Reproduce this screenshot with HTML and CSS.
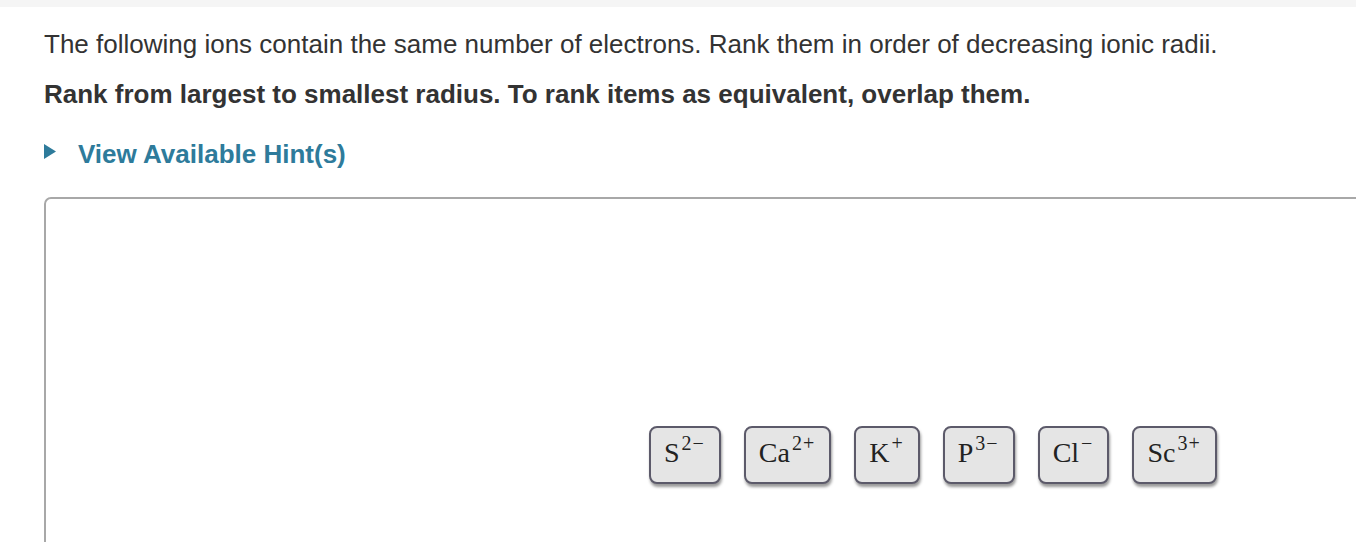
FILE: index.html
```html
<!DOCTYPE html>
<html lang="en">
<head>
    <meta charset="UTF-8">
    <title>Rank the ions</title>
    <link rel="stylesheet" href="styles.css">
</head>
<body>
    <div class="topbar"></div>
    <div class="problem">
        <p class="prompt">The following ions contain the same number of electrons. Rank them in order of decreasing ionic radii.</p>
        <p class="instructions">Rank from largest to smallest radius. To rank items as equivalent, overlap them.</p>
        <a class="hint" href="#">
            <svg width="12" height="15" viewBox="0 0 12 15"><polygon points="0,0 12,7.5 0,15" fill="#2e7b9b"></polygon></svg>
            <span>View Available Hint(s)</span>
        </a>
        <div class="rank-box">
            <div class="tiles">
                <div class="tile">S<sup>2&minus;</sup></div>
                <div class="tile">Ca<sup>2+</sup></div>
                <div class="tile">K<sup>+</sup></div>
                <div class="tile">P<sup>3&minus;</sup></div>
                <div class="tile">Cl<sup>&minus;</sup></div>
                <div class="tile">Sc<sup>3+</sup></div>
            </div>
        </div>
    </div>
</body>
</html>
```

FILE: styles.css
```css
body {
    margin: 0;
    overflow: hidden;
    background: #fff;
    font-family: "Liberation Sans", Arial, sans-serif;
    color: #333;
}
.topbar {
    height: 7px;
    background: #f5f5f5;
}
.problem {
    padding-left: 44px;
}
.prompt {
    margin: 22px 0 0;
    font-size: 26px;
    line-height: 30px;
}
.instructions {
    margin: 20px 0 0;
    font-size: 26px;
    line-height: 30px;
    font-weight: 700;
}
.hint {
    display: flex;
    align-items: center;
    gap: 22px;
    margin-top: 30px;
    color: #2e7b9b;
    font-size: 26px;
    font-weight: 700;
    text-decoration: none;
    line-height: 30px;
}
.hint svg {
    margin-bottom: 6px;
}
.rank-box {
    margin-top: 28px;
    margin-right: -40px;
    height: 400px;
    border: 2px solid #a8a8a8;
    border-radius: 7px 0 0 0;
}
.tiles {
    display: flex;
    gap: 23px;
    padding: 227px 0 0 603px;
}
.tile {
    box-sizing: border-box;
    height: 58px;
    padding: 0 14px 4px 13px;
    display: flex;
    align-items: center;
    border: 2px solid #5c5a6a;
    border-radius: 8px;
    background: #e5e5e5;
    box-shadow: 1px 3px 3px rgba(0,0,0,0.4);
    font-family: "Liberation Serif", "Times New Roman", serif;
    font-size: 28px;
    color: #222;
}
.tile sup {
    font-size: 20px;
    line-height: 1;
    vertical-align: baseline;
    position: relative;
    top: -10px;
    margin-left: 2px;
    letter-spacing: 1px;
}
```
